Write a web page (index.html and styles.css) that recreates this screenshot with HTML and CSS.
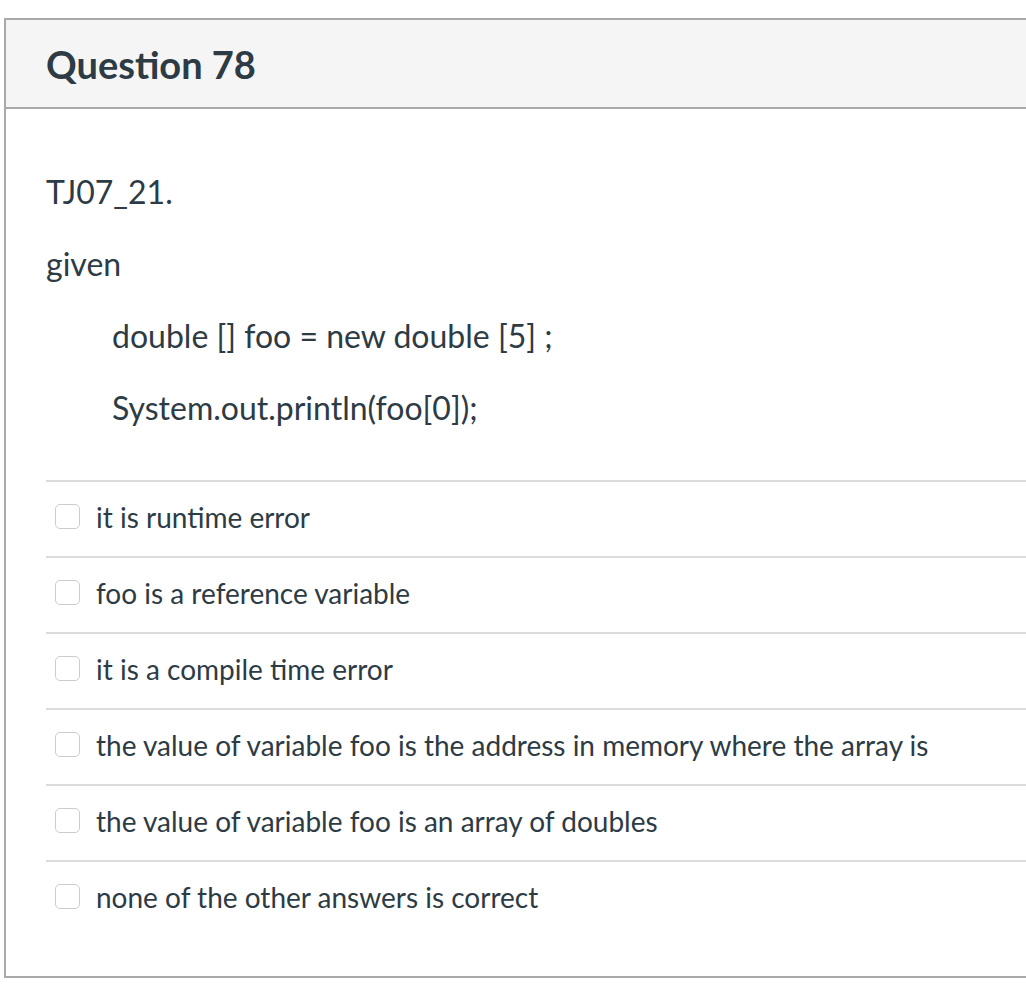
FILE: index.html
```html
<!DOCTYPE html>
<html>
<head>
<meta charset="utf-8">
<link rel="stylesheet" href="styles.css">
</head>
<body>
<div class="card">
  <div class="header"><h2 class="title">Question 78</h2></div>
  <div class="body">
    <div class="text">
      <p>TJ07_21.</p>
      <p>given</p>
      <p class="code">double [] foo = new double [5] ;</p>
      <p class="code">System.out.println(foo[0]);</p>
    </div>
    <div class="answers">
      <div class="answer"><span class="box"></span><span class="label">it is runtime error</span></div>
      <div class="answer"><span class="box"></span><span class="label">foo is a reference variable</span></div>
      <div class="answer"><span class="box"></span><span class="label">it is a compile time error</span></div>
      <div class="answer"><span class="box"></span><span class="label">the value of variable foo is the address in memory where the array is</span></div>
      <div class="answer"><span class="box"></span><span class="label">the value of variable foo is an array of doubles</span></div>
      <div class="answer"><span class="box"></span><span class="label">none of the other answers is correct</span></div>
    </div>
  </div>
</div>
</body>
</html>
```

FILE: styles.css
```css
html, body {
  margin: 0;
  padding: 0;
  background: #fff;
  overflow: hidden;
}
body {
  font-family: Lato, "Open Sans", sans-serif;
  color: #2d3b45;
}
.card {
  margin: 18px 0 0 4px;
  width: 1022px;
  border: 2px solid #a9a9a9;
  border-right: none;
  box-sizing: border-box;
}
.header {
  height: 87px;
  background: #f5f5f5;
  border-bottom: 2px solid #a9a9a9;
  display: flex;
  align-items: center;
  padding-left: 40px;
}
.title {
  margin: 0;
  font-size: 38px;
  font-weight: 700;
  color: #2d3b45;
}
.body {
  padding: 47px 0 40px 40px;
}
.text p {
  margin: 0;
  font-size: 32px;
  line-height: 72px;
}
.text .code {
  padding-left: 66px;
}
.answers {
  margin-top: 36px;
}
.answer {
  box-sizing: border-box;
  border-top: 2px solid #dcdcdc;
  height: 76px;
  padding-bottom: 5px;
  display: flex;
  align-items: center;
  padding-left: 9px;
}
.box {
  width: 23px;
  height: 23px;
  border: 1px solid #c9cdd1;
  border-radius: 5px;
  background: #fff;
  flex: none;
}
.label {
  margin-left: 16px;
  font-size: 28px;
}
```
